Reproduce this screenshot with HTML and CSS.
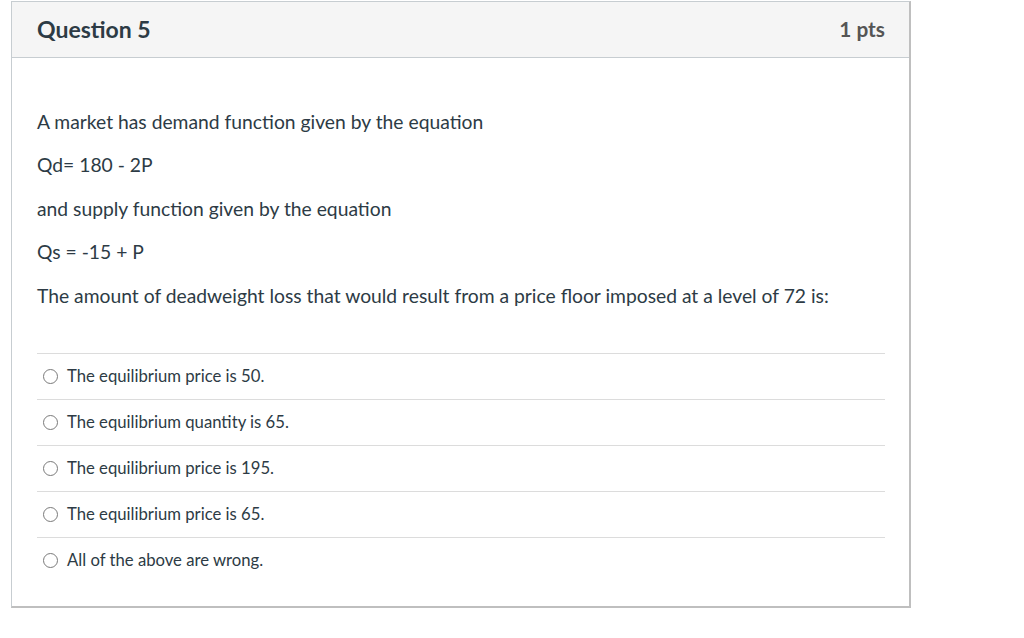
FILE: index.html
```html
<!DOCTYPE html>
<html>
<head>
<meta charset="utf-8">
<link rel="stylesheet" href="styles.css">
</head>
<body>
<div class="card">
  <div class="header">
    <div class="title">Question 5</div>
    <div class="pts">1 pts</div>
  </div>
  <div class="body">
    <div class="text">
      <p>A market has demand function given by the equation</p>
      <p>Qd= 180 - 2P</p>
      <p>and supply function given by the equation</p>
      <p>Qs = -15 + P</p>
      <p>The amount of deadweight loss that would result from a price floor imposed at a level of 72 is:</p>
    </div>
    <div class="answers">
      <div class="answer"><span class="radio"></span><span>The equilibrium price is 50.</span></div>
      <div class="answer"><span class="radio"></span><span>The equilibrium quantity is 65.</span></div>
      <div class="answer"><span class="radio"></span><span>The equilibrium price is 195.</span></div>
      <div class="answer"><span class="radio"></span><span>The equilibrium price is 65.</span></div>
      <div class="answer"><span class="radio"></span><span>All of the above are wrong.</span></div>
    </div>
  </div>
</div>
</body>
</html>
```
FILE: styles.css
```css
html, body { margin: 0; padding: 0; background: #fff; }
body { font-family: Lato, "Open Sans", sans-serif; color: #2d3b45; }
.card {
  margin: 1px 0 0 11px;
  width: 897px;
  border: 1px solid #c7cdd1;
  border-right: 2px solid #bfbfbf;
  border-bottom: 2px solid #bfbfbf;
  box-sizing: content-box;
}
.header {
  display: flex;
  justify-content: space-between;
  align-items: center;
  height: 53px;
  padding: 0 24px 2px 25px;
  background: #f5f5f5;
  border-bottom: 1px solid #c7cdd1;
}
.title { font-size: 23px; font-weight: 700; color: #2d3b45; }
.pts { font-size: 20.8px; font-weight: 700; color: #555; }
.body { padding: 49.5px 24px 23px 25px; }
.text p { margin: 0 0 16.5px; font-size: 19.3px; line-height: 27px; }
.text p:last-child { margin-bottom: 0; }
.text { margin-bottom: 44.5px; }
.answers { border-top: 1px solid #dcdcdc; }
.answer {
  display: flex;
  align-items: center;
  height: 43px;
  padding: 0 0 2px 6px;
  border-bottom: 1px solid #dcdcdc;
  font-size: 16.7px;
}
.answer:last-child { border-bottom: none; }
.radio {
  width: 13px; height: 13px;
  border: 1px solid #7a7a7a;
  border-radius: 50%;
  margin: 2px 9px 0 0;
  flex: none;
}
```
